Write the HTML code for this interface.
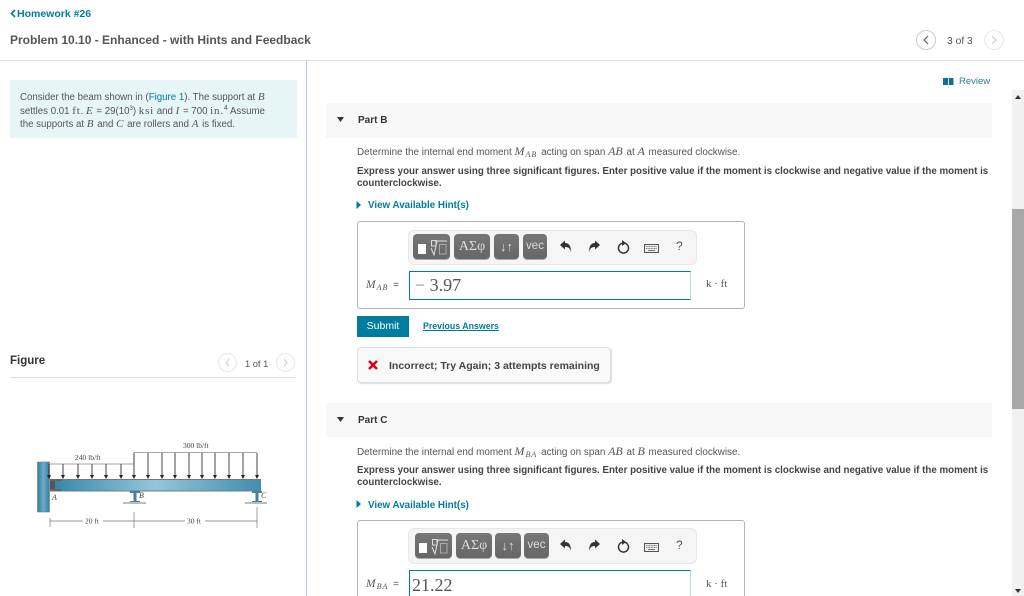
<!DOCTYPE html>
<html><head><meta charset="utf-8"><style>
html,body{margin:0;padding:0;background:#fff;width:1024px;height:596px;overflow:hidden}
#p{width:1024px;height:596px;position:relative;overflow:hidden;font-family:"Liberation Sans",sans-serif;color:#444}
.a{position:absolute;white-space:nowrap}
.m{font-family:"Liberation Serif",serif;font-style:italic;padding-right:1px}
.r{font-family:"Liberation Serif",serif;letter-spacing:.8px}
.t{font-size:9.900px;line-height:12px;color:#555}
.b{font-size:9.750px;line-height:12px;font-weight:bold;color:#444}
.l{color:#007c9e}
.bar{position:absolute;left:326px;width:666px;background:#f8f8f8}
.box{position:absolute;border:1px solid #b5b5b5;border-radius:3px;background:#fff;box-sizing:border-box}
.tb{position:absolute;width:289px;height:35px;background:#f5f5f5;border:1px solid #e8e8e8;border-radius:6px;box-sizing:border-box}
.btn{position:absolute;top:3px;height:25px;background:linear-gradient(#777,#666);border-radius:4px;color:#ddd;text-align:center;line-height:25px;font-size:12px;box-shadow:0 1px 0 #aaa}
.inp{position:absolute;border:1px solid #007c9e;border-right-color:#c5dbe3;background:#fff;box-sizing:border-box;font-family:"Liberation Serif",serif;font-size:18px;color:#555}
.circ{position:absolute;border-radius:50%;box-sizing:border-box;background:#fff}
</style></head><body><div id="p">

<svg class="a" style="left:10px;top:9px" width="6" height="9" viewBox="0 0 6 9"><path d="M5 1 1.500 4.500 5 8" fill="none" stroke="#007c9e" stroke-width="1.600"/></svg>
<div class="a l" style="left:17px;top:8px;font-size:10.500px;line-height:12px;font-weight:bold;">Homework #26</div>
<div class="a" style="left:10px;top:33px;font-size:12px;line-height:15px;font-weight:bold;color:#555">Problem 10.10 - Enhanced - with Hints and Feedback</div>

<div class="circ" style="left:916px;top:30px;width:20px;height:20px;border:1px solid #ccc"></div>
<svg class="a" style="left:922px;top:35px" width="8" height="10" viewBox="0 0 8 10"><path d="M6 1 2 5 6 9" fill="none" stroke="#666" stroke-width="1.200"/></svg>
<div class="a t" style="left:947px;top:36px;font-size:10.300px;color:#555">3 of 3</div>
<div class="circ" style="left:984px;top:30px;width:20px;height:20px;border:1px solid #e8e8e8"></div>
<svg class="a" style="left:990px;top:35px" width="8" height="10" viewBox="0 0 8 10"><path d="M2 1 6 5 2 9" fill="none" stroke="#ccc" stroke-width="1.200"/></svg>

<div class="a" style="left:0;top:60px;width:1024px;height:1px;background:#dcdfe2"></div>
<div class="a" style="left:306px;top:60px;width:1px;height:536px;background:#bccfdd"></div>

<div class="a" style="left:10px;top:80px;width:287px;height:58px;background:#e6f5f6"></div>
<div class="a t" style="left:20px;top:91px;line-height:12.500px;color:#555;font-size:9.700px">Consider the beam shown in (<span class="l">Figure 1</span>). The support at <span class="m" style="font-size:11px">B</span><br>settles 0.01 <span class="r" style="font-size:11px">ft</span>. <span class="m" style="font-size:11px">E</span> = 29(10<sup style="font-size:6px;line-height:0">3</sup>) <span class="r" style="font-size:11px">ksi</span> and <span class="m" style="font-size:11px">I</span> = 700 <span class="r" style="font-size:11px">in.</span><sup style="font-size:7px;line-height:0">4</sup> Assume<br>the supports at <span class="m" style="font-size:11px">B</span> and <span class="m" style="font-size:11px">C</span> are rollers and <span class="m" style="font-size:11px">A</span> is fixed.</div>

<div class="a" style="left:10px;top:354px;font-size:11.500px;line-height:14px;font-weight:bold;color:#333">Figure</div>
<div class="circ" style="left:218px;top:353px;width:19px;height:19px;border:1px solid #e6e6e6"></div>
<svg class="a" style="left:224px;top:358px" width="7" height="9" viewBox="0 0 7 9"><path d="M5 1 2 4.500 5 8" fill="none" stroke="#ccc" stroke-width="1"/></svg>
<div class="a t" style="left:245px;top:358px;color:#555;font-size:9.300px">1 of 1</div>
<div class="circ" style="left:276px;top:353px;width:19px;height:19px;border:1px solid #e6e6e6"></div>
<svg class="a" style="left:282px;top:358px" width="7" height="9" viewBox="0 0 7 9"><path d="M2 1 5 4.500 2 8" fill="none" stroke="#ccc" stroke-width="1"/></svg>
<div class="a" style="left:10px;top:377px;width:286px;height:1px;background:#dcdfe2"></div>

<svg class="a" style="left:30px;top:435px;filter:blur(.3px)" width="240" height="100" viewBox="0 0 240 100">
<defs><linearGradient id="g" x1="0" x2="1" y1="0" y2="0"><stop offset="0" stop-color="#2f86a8"/><stop offset=".5" stop-color="#94c6da"/><stop offset="1" stop-color="#3d8fae"/></linearGradient>
<linearGradient id="w" x1="0" x2="1" y1="0" y2="0"><stop offset="0" stop-color="#2e7fa2"/><stop offset=".5" stop-color="#6eabc5"/><stop offset="1" stop-color="#2e7fa2"/></linearGradient></defs>
<rect x="7.500" y="27" width="12" height="50" fill="url(#w)" stroke="#777" stroke-width=".6"/>
<rect x="20" y="44" width="211" height="12" fill="url(#g)"/>
<path d="M20 44.500H231M20 56H231" stroke="#777" stroke-width="1"/>
<path d="M20 45h12M20 55h12" stroke="#666" stroke-width="2"/><rect x="20" y="46" width="5" height="8" fill="#555"/>
<path d="M19 29H104M104 29V17.500H227" fill="none" stroke="#8a8a8a" stroke-width=".8"/>
<path d="M19 29V41M33 29V41M48 29V41M62 29V41M76 29V41M91 29V41M104 18V41M118 18V41M132 18V41M145 18V41M159 18V41M172 18V41M185 18V41M199 18V41M213 18V41M227 18V41" stroke="#333" stroke-width=".9" fill="none"/>
<path d="M17 40H21L19 44zM31 40H35L33 44zM46 40H50L48 44zM60 40H64L62 44zM74 40H78L76 44zM89 40H93L91 44zM102 40H106L104 44zM116 40H120L118 44zM130 40H134L132 44zM143 40H147L145 44zM157 40H161L159 44zM170 40H174L172 44zM183 40H187L185 44zM197 40H201L199 44zM211 40H215L213 44zM225 40H229L227 44z" fill="#222"/>
<g fill="#4a7f95"><rect x="100" y="56" width="10" height="2"/><rect x="103.500" y="57" width="3" height="10"/><rect x="100" y="66" width="10" height="2"/><rect x="222" y="56" width="10" height="2"/><rect x="225.500" y="57" width="3" height="10"/><rect x="222" y="66" width="10" height="2"/></g>
<path d="M93 68h23M215 68h22" stroke="#b5bfc2" stroke-width="2"/>
<path d="M20 86H53M73 86H155M175 86H227M20 83V92M104 77V93M227 72V93" stroke="#777" stroke-width=".7" fill="none"/>
<g font-family="Liberation Serif,serif" fill="#444" font-size="7.500">
<text x="45" y="25">240 lb/ft</text><text x="153" y="13">300 lb/ft</text>
<text x="55" y="88.500">20 ft</text><text x="157" y="88.500">30 ft</text>
<text x="22" y="65" font-style="italic" font-size="8">A</text><text x="109" y="63" font-style="italic" font-size="8">B</text><text x="231" y="63" font-style="italic" font-size="8">C</text></g>
</svg>

<svg class="a" style="left:943px;top:78px" width="11" height="7" viewBox="0 0 11 7"><path d="M0 0H5V7H0zM5.800 0H10.500V7H5.800z" fill="#12708f"/></svg>
<div class="a" style="left:959px;top:76px;font-size:9.500px;line-height:12px;color:#2a7f9c">Review</div>

<div class="bar" style="top:103px;height:35px"></div>
<svg class="a" style="left:337px;top:117px" width="8" height="6"><path d="M0 0H7L3.500 5z" fill="#333"/></svg>
<div class="a" style="left:358px;top:114px;font-size:10px;line-height:13px;font-weight:bold;color:#333">Part B</div>
<div class="a t" style="left:357px;top:145px">Determine the internal end moment <span class="m" style="font-size:12px">M</span><span class="m" style="font-size:8px;position:relative;top:2px;letter-spacing:1px">AB</span> acting on span <span class="m" style="font-size:12px">AB</span> at <span class="m" style="font-size:12px">A</span> measured clockwise.</div>
<div class="a b" style="left:357px;top:166px;">Express your answer using three significant figures. Enter positive value if the moment is clockwise and negative value if the moment is<br>counterclockwise.</div>
<svg class="a" style="left:356px;top:201px" width="6" height="8"><path d="M0.500 0 5 4 0.500 8z" fill="#007c9e"/></svg>
<div class="a l" style="left:368px;top:199px;font-size:9.800px;line-height:13px;font-weight:bold">View Available Hint(s)</div>

<div class="box" style="left:357px;top:221px;width:388px;height:88px"></div>
<div class="tb" style="left:408px;top:230px">
 <div class="btn" style="left:4px;width:37px"></div><div class="btn" style="left:45px;width:36px;font-family:'Liberation Serif',serif;font-size:14px">ΑΣφ</div><div class="btn" style="left:85px;width:25px;font-size:13px">↓↑</div><div class="btn" style="left:114px;width:24px;font-size:11.500px">vec</div>
</div>
<svg class="a" style="left:417px;top:238px" width="32" height="18" viewBox="0 0 32 18"><rect x="1" y="6" width="8" height="10" fill="#fff"/><rect x="14.500" y="2.500" width="4.500" height="5.500" fill="none" stroke="#ddd"/><path d="M14 10 17 17 20 3H30" fill="none" stroke="#ddd"/><rect x="22.500" y="6.500" width="6.500" height="9.500" fill="none" stroke="#aaa"/></svg>
<svg class="a" style="left:559px;top:240px" width="14" height="13" viewBox="0 0 14 13"><path d="M1 5 6 .5V3C10 3 12 6 12 12 11 8 9 7 6 7V9.500z" fill="#333"/></svg>
<svg class="a" style="left:587px;top:240px" width="14" height="13" viewBox="0 0 14 13"><path d="M13 5 8 .5V3C4 3 2 6 2 12 3 8 5 7 8 7V9.500z" fill="#333"/></svg>
<svg class="a" style="left:616px;top:240px" width="15" height="15" viewBox="0 0 15 15"><path d="M6 3.300A5 5 0 1 0 9 3.300" fill="none" stroke="#333" stroke-width="1.500"/><path d="M6 0 10 3 6 6z" fill="#333"/></svg>
<svg class="a" style="left:644px;top:244px" width="15" height="9" viewBox="0 0 15 9"><rect x=".5" y=".5" width="14" height="8" fill="#eee" stroke="#555"/><path d="M2 2.500H13M2 4.500H13" stroke="#777" stroke-dasharray="1 .6"/><path d="M4 6.500H11" stroke="#777"/></svg>
<div class="a" style="left:676px;top:239px;font-size:12px;line-height:15px;color:#555">?</div>

<div class="a" style="left:366px;top:279px;font-size:10px;line-height:13px;color:#555"><span class="m" style="font-size:11.500px">M</span><span class="m" style="font-size:8px;position:relative;top:2px;letter-spacing:1px">AB</span> <span style="padding-left:1px">=</span></div>
<div class="inp" style="left:409px;top:271px;width:282px;height:29px;padding-left:5px;line-height:27px"><span style="color:#888">−</span> 3.97</div>
<div class="a r" style="left:706px;top:278px;font-size:11px;line-height:13px;color:#555;letter-spacing:0">k · ft</div>

<div class="a" style="left:357px;top:316px;width:52px;height:21px;background:#007c9e;color:#fff;font-size:10.500px;line-height:21px;text-align:center">Submit</div>
<div class="a l" style="left:423px;top:320px;font-size:8.800px;line-height:12px;font-weight:bold;text-decoration:underline">Previous Answers</div>

<div class="a" style="left:357px;top:347px;width:254px;height:36px;box-sizing:border-box;background:#f9f9f9;border:1px solid #ddd;border-radius:4px;box-shadow:1px 1px 1px #ddd"></div>
<svg class="a" style="left:368px;top:360px" width="10" height="10" viewBox="0 0 10 10"><path d="M1 1 9 9M9 1 1 9" stroke="#d9001b" stroke-width="2.600"/></svg>
<div class="a" style="left:389px;top:360px;font-size:10.500px;line-height:13px;font-weight:bold;color:#444">Incorrect; Try Again; 3 attempts remaining</div>

<div class="bar" style="top:403px;height:34px"></div>
<svg class="a" style="left:337px;top:417px" width="8" height="6"><path d="M0 0H7L3.500 5z" fill="#333"/></svg>
<div class="a" style="left:358px;top:414px;font-size:10px;line-height:13px;font-weight:bold;color:#333">Part C</div>
<div class="a t" style="left:357px;top:445px">Determine the internal end moment <span class="m" style="font-size:12px">M</span><span class="m" style="font-size:8px;position:relative;top:2px;letter-spacing:1px">BA</span> acting on span <span class="m" style="font-size:12px">AB</span> at <span class="m" style="font-size:12px">B</span> measured clockwise.</div>
<div class="a b" style="left:357px;top:465px">Express your answer using three significant figures. Enter positive value if the moment is clockwise and negative value if the moment is<br>counterclockwise.</div>
<svg class="a" style="left:356px;top:500px" width="6" height="8"><path d="M0.500 0 5 4 0.500 8z" fill="#007c9e"/></svg>
<div class="a l" style="left:368px;top:499px;font-size:9.800px;line-height:13px;font-weight:bold">View Available Hint(s)</div>

<div class="box" style="left:357px;top:520px;width:388px;height:100px"></div>
<div class="tb" style="left:408px;top:528px;height:36px;">
 <div class="btn" style="left:6px;width:37px;top:4px"></div><div class="btn" style="left:47px;width:36px;top:4px;font-family:'Liberation Serif',serif;font-size:14px">ΑΣφ</div><div class="btn" style="left:86px;width:26px;top:4px;font-size:13px">↓↑</div><div class="btn" style="left:115px;width:25px;top:4px;font-size:11.500px">vec</div>
</div>
<svg class="a" style="left:418px;top:537px" width="32" height="18" viewBox="0 0 32 18"><rect x="1" y="6" width="8" height="10" fill="#fff"/><rect x="14.500" y="2.500" width="4.500" height="5.500" fill="none" stroke="#ddd"/><path d="M14 10 17 17 20 3H30" fill="none" stroke="#ddd"/><rect x="22.500" y="6.500" width="6.500" height="9.500" fill="none" stroke="#aaa"/></svg>
<svg class="a" style="left:559px;top:539px" width="14" height="13" viewBox="0 0 14 13"><path d="M1 5 6 .5V3C10 3 12 6 12 12 11 8 9 7 6 7V9.500z" fill="#333"/></svg>
<svg class="a" style="left:587px;top:539px" width="14" height="13" viewBox="0 0 14 13"><path d="M13 5 8 .5V3C4 3 2 6 2 12 3 8 5 7 8 7V9.500z" fill="#333"/></svg>
<svg class="a" style="left:616px;top:539px" width="15" height="15" viewBox="0 0 15 15"><path d="M6 3.300A5 5 0 1 0 9 3.300" fill="none" stroke="#333" stroke-width="1.500"/><path d="M6 0 10 3 6 6z" fill="#333"/></svg>
<svg class="a" style="left:644px;top:543px" width="15" height="9" viewBox="0 0 15 9"><rect x=".5" y=".5" width="14" height="8" fill="#eee" stroke="#555"/><path d="M2 2.500H13M2 4.500H13" stroke="#777" stroke-dasharray="1 .6"/><path d="M4 6.500H11" stroke="#777"/></svg>
<div class="a" style="left:676px;top:538px;font-size:12px;line-height:15px;color:#555">?</div>

<div class="a" style="left:366px;top:578px;font-size:10px;line-height:13px;color:#555"><span class="m" style="font-size:11.500px">M</span><span class="m" style="font-size:8px;position:relative;top:2px;letter-spacing:1px">BA</span> <span style="padding-left:1px">=</span></div>
<div class="inp" style="left:409px;top:570px;width:282px;height:40px;padding-left:2px;line-height:29px">21.22</div>
<div class="a r" style="left:706px;top:578px;font-size:11px;line-height:13px;color:#555;letter-spacing:0">k · ft</div>

<div class="a" style="left:1012px;top:90px;width:12px;height:506px;background:#f1f1f1"></div>
<div class="a" style="left:1012px;top:209px;width:12px;height:200px;background:#a8a8a8"></div>
<svg class="a" style="left:1015px;top:95px" width="6" height="4"><path d="M3 0 6 4H0z" fill="#333"/></svg>
<svg class="a" style="left:1015px;top:589px" width="6" height="4"><path d="M0 0H6L3 4z" fill="#333"/></svg>
</div></body></html>
